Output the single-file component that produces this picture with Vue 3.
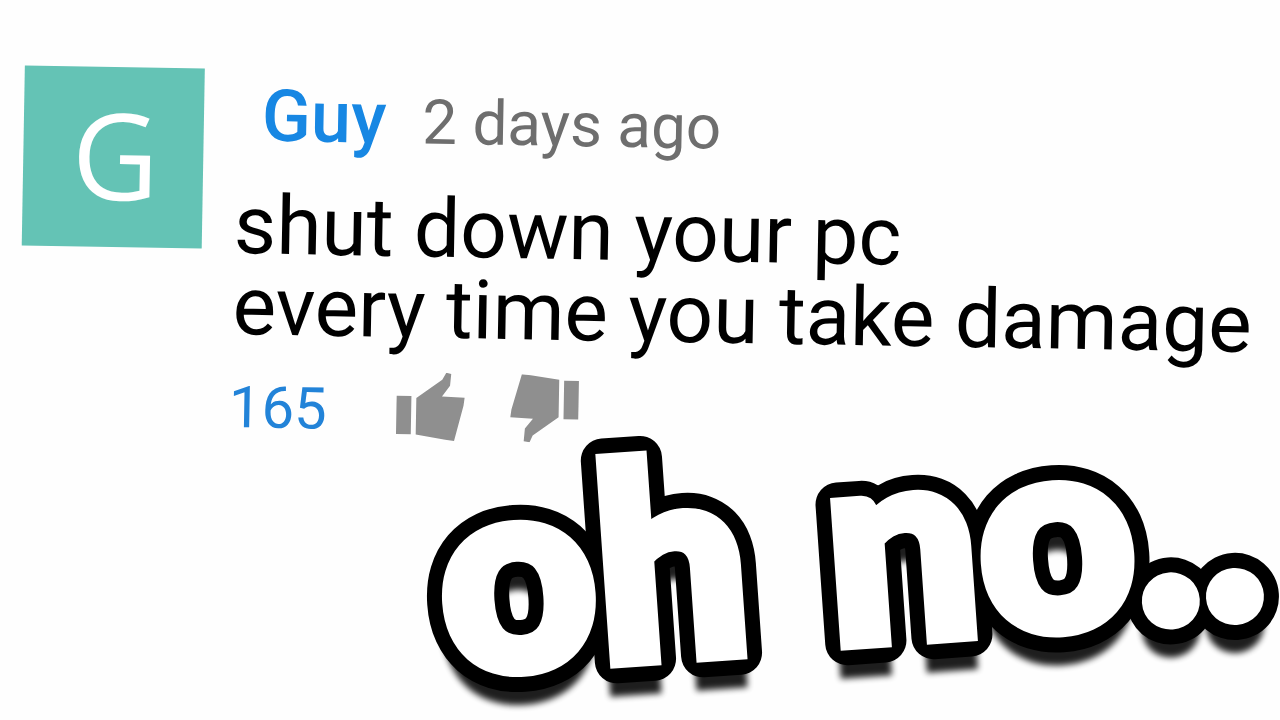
<script setup>
import { ref } from 'vue'

const comment = {
  author: 'Guy',
  initial: 'G',
  age: '2 days ago',
  lines: ['shut down your pc', 'every time you take damage'],
  likes: 165,
}
const vote = ref(0)
</script>

<template>
  <main class="page">
    <article class="comment">
      <div class="avatar" aria-hidden="true">{{ comment.initial }}</div>
      <div class="body">
        <header class="meta">
          <a class="author" href="#">{{ comment.author }}</a>
          <time class="age">{{ comment.age }}</time>
        </header>
        <p class="text">
          <span v-for="line in comment.lines" :key="line" class="line">{{ line }}</span>
        </p>
        <div class="votes">
          <span class="count">{{ comment.likes }}</span>
          <button class="vote" type="button" aria-label="Like" @click="vote = 1">
            <svg viewBox="0 0 69 69" aria-hidden="true">
              <path d="M0 24H15V63H0ZM20 26 46 7 50 0 55 1 54 13 46 24 69 25 68 33 59 69 50 68 20 63Z" />
            </svg>
          </button>
          <button class="vote" type="button" aria-label="Dislike" @click="vote = -1">
            <svg viewBox="0 0 69 69" aria-hidden="true">
              <path d="M69 45H54V6H69ZM49 43 23 62 20 69 14 68 15 55 23 45 0 44 1 36 11 0 20 1 49 5Z" />
            </svg>
          </button>
        </div>
      </div>
    </article>

    <svg class="caption" viewBox="0 0 1280 290" role="img" aria-label="oh no..">
      <defs>
        <filter id="soft" x="-10%" y="-10%" width="120%" height="130%">
          <feGaussianBlur stdDeviation="3" />
        </filter>
        <g id="words" transform="rotate(-4 436 250)">
          <text x="446" y="250">oh</text>
          <text x="833" y="248">no..</text>
        </g>
      </defs>
      <use class="shadow" href="#words" y="28" filter="url(#soft)" />
      <use class="outline" href="#words" />
      <use class="face" href="#words" />
    </svg>
  </main>
</template>

<style>
body {
  margin: 0;
  background: #fefefe;
}
</style>

<style scoped>
.page {
  min-height: 100vh;
  overflow: hidden;
  box-sizing: border-box;
  padding-top: 65px;
  background: #fefefe;
  font-family: Roboto, "Liberation Sans", sans-serif;
}

.comment {
  display: flex;
  gap: 30px;
  padding-left: 26px;
  transform: rotate(1deg);
  transform-origin: 0 -65px;
}

.avatar {
  flex: none;
  width: 180px;
  height: 180px;
  background: #64c3b5;
  color: #fff;
  font-family: "Open Sans", sans-serif;
  font-size: 120px;
  font-weight: 500;
  line-height: 174px;
  text-align: center;
  text-indent: 4px;
}

.body {
  flex: 1;
  padding-top: 5px;
  white-space: nowrap;
}

.meta {
  display: flex;
  align-items: baseline;
  gap: 36px;
  margin-left: 28px;
  line-height: 84px;
}

.author {
  color: #1787e3;
  font-size: 72px;
  font-weight: 500;
  text-decoration: none;
}

.age {
  color: #6e6e6e;
  font-size: 62px;
}

.text {
  margin: 24px 0 22px;
  padding-left: 2px;
  color: #000;
  font-size: 82px;
  line-height: 81px;
}

.line {
  display: block;
}

.votes {
  display: flex;
  align-items: flex-end;
}

.count {
  margin-right: 69px;
  color: #2283d8;
  font-size: 58px;
  line-height: 60px;
}

.vote {
  width: 69px;
  height: 68px;
  margin-right: 45px;
  padding: 0;
  border: 0;
  background: none;
  cursor: pointer;
}

.vote svg {
  display: block;
  width: 100%;
  height: 100%;
  fill: #8f8f8f;
}

.caption {
  display: block;
  width: 100%;
  margin-top: -9px;
  position: relative;
  overflow: visible;
  pointer-events: none;
  font-family: Lato, "Open Sans", sans-serif;
  font-size: 270px;
  font-weight: 900;
}

.shadow {
  fill: #000;
  stroke: #000;
  stroke-width: 14px;
  opacity: 0.88;
}

.outline {
  fill: #000;
  stroke: #000;
  stroke-width: 44px;
  stroke-linejoin: round;
}

.face {
  fill: #fff;
  stroke: #fff;
  stroke-width: 14px;
}
</style>
